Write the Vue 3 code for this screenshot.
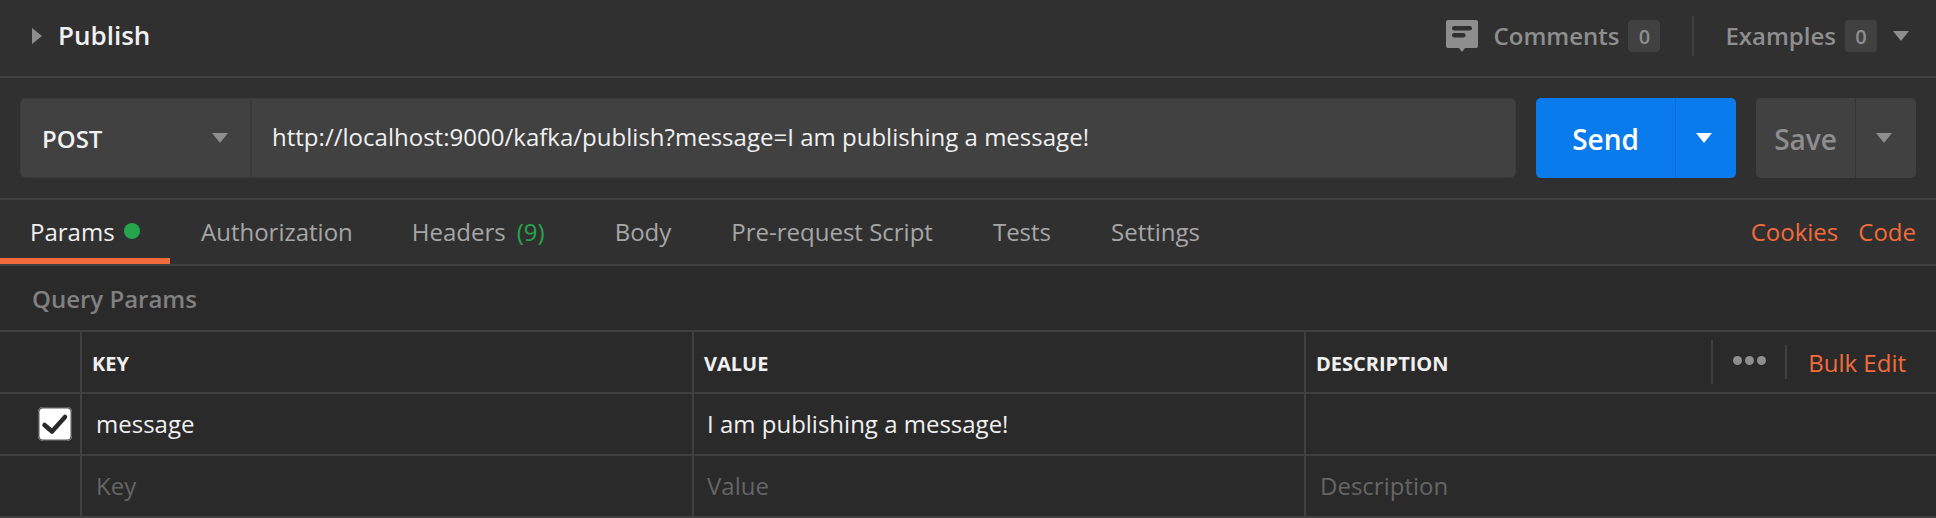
<script setup>
const tabs = [
  { label: 'Authorization' },
  { label: 'Headers', count: '(9)' },
  { label: 'Body' },
  { label: 'Pre-request Script' },
  { label: 'Tests' },
  { label: 'Settings' }
]
</script>

<template>
  <div class="page">
    <header class="title-bar">
      <div class="title-left">
        <span class="caret-right"></span>
        <span class="title">Publish</span>
      </div>
      <div class="title-right">
        <svg class="comment-icon" viewBox="0 0 32 32" width="32" height="32">
          <path fill="#8e8e8e" d="M2 0h28a2 2 0 0 1 2 2v24a2 2 0 0 1-2 2h-11l-3 4-3-4H2a2 2 0 0 1-2-2V2a2 2 0 0 1 2-2z" />
          <rect x="6" y="6" width="20" height="4.5" rx="2.2" fill="#303030" />
          <rect x="6" y="13" width="13.5" height="4.5" rx="2.2" fill="#303030" />
        </svg>
        <span class="meta">Comments</span>
        <span class="badge">0</span>
        <span class="meta-sep"></span>
        <span class="meta">Examples</span>
        <span class="badge">0</span>
        <span class="caret-down gray meta-caret"></span>
      </div>
    </header>

    <section class="url-bar">
      <div class="url-group">
        <div class="method">
          <span>POST</span>
          <span class="caret-down gray"></span>
        </div>
        <div class="url">http://localhost:9000/kafka/publish?message=I am publishing a message!</div>
      </div>
      <div class="send">
        <span class="send-label">Send</span>
        <span class="send-more"><span class="caret-down white"></span></span>
      </div>
      <div class="save">
        <span class="save-label">Save</span>
        <span class="save-more"><span class="caret-down gray"></span></span>
      </div>
    </section>

    <nav class="tabs">
      <div class="tab active">Params<span class="dot"></span></div>
      <div v-for="t in tabs" :key="t.label" class="tab">
        {{ t.label }}<span v-if="t.count" class="count">{{ t.count }}</span>
      </div>
      <div class="tab-links">
        <span>Cookies</span>
        <span>Code</span>
      </div>
    </nav>

    <main class="panel">
      <div class="panel-title">Query Params</div>
      <div class="row head">
        <div class="cell check"></div>
        <div class="cell key">KEY</div>
        <div class="cell value">VALUE</div>
        <div class="cell desc">
          <span>DESCRIPTION</span>
          <div class="head-tools">
            <span class="tool-sep tall"></span>
            <span class="dots"><i></i><i></i><i></i></span>
            <span class="tool-sep"></span>
            <span class="bulk">Bulk Edit</span>
          </div>
        </div>
      </div>
      <div class="row">
        <div class="cell check">
          <span class="checkbox">
            <svg viewBox="0 0 34 34" width="34" height="34">
              <path d="M6.5 18 14 24.5 27 10" fill="none" stroke="#2a2a2a" stroke-width="4.5" stroke-linecap="round" stroke-linejoin="round" />
            </svg>
          </span>
        </div>
        <div class="cell key input">message</div>
        <div class="cell value input">I am publishing a message!</div>
        <div class="cell desc input"></div>
      </div>
      <div class="row">
        <div class="cell check"></div>
        <div class="cell key input ph">Key</div>
        <div class="cell value input ph">Value</div>
        <div class="cell desc input ph">Description</div>
      </div>
    </main>
  </div>
</template>

<style>
html, body { margin: 0; background: #2c2c2c; }
</style>

<style scoped>
.page {
  width: 1936px;
  height: 518px;
  overflow: hidden;
  background: #303030;
  color: #f0f0f0;
  font-family: "Open Sans", "Noto Sans", sans-serif;
  font-size: 24px;
}
.title-bar {
  height: 76px;
  box-sizing: border-box;
  display: flex;
  align-items: center;
  justify-content: space-between;
  padding: 0 27px 4px 32px;
}
.title-left, .title-right { display: flex; align-items: center; }
.caret-right {
  width: 0; height: 0;
  border-top: 8px solid transparent;
  border-bottom: 8px solid transparent;
  border-left: 10px solid #8e8e8e;
  margin-right: 16px;
}
.title { font-weight: 600; font-size: 26px; color: #f0f0f0; padding-bottom: 2px; }
.comment-icon { margin-right: 16px; }
.meta { color: #8e8e8e; font-weight: 600; font-size: 24px; padding-bottom: 2px; }
.badge {
  width: 32px; height: 32px;
  margin-left: 9px;
  border-radius: 4px;
  background: #414141;
  color: #8e8e8e;
  font-size: 20px;
  font-weight: 600;
  display: flex; align-items: center; justify-content: center;
}
.meta-sep { width: 2px; height: 40px; background: #404040; margin: 0 31px 0 32px; }
.meta-caret { margin-left: 16px; }
.caret-down {
  display: inline-block;
  width: 0; height: 0;
  border-left: 8px solid transparent;
  border-right: 8px solid transparent;
  border-top: 10px solid #8e8e8e;
}
.caret-down.white { border-top-color: #fff; }
.url-bar {
  height: 124px;
  box-sizing: border-box;
  border-top: 2px solid #404040;
  border-bottom: 2px solid #404040;
  padding: 20px 20px 0 20px;
  display: flex;
  align-items: flex-start;
}
.url-group {
  width: 1496px;
  height: 80px;
  display: flex;
  background: #414141;
  border-radius: 5px;
  box-sizing: border-box;
  border: 1px solid #3c3c3c;
}
.method {
  width: 231px;
  box-sizing: border-box;
  border-right: 2px solid #3a3a3a;
  padding: 0 22px 0 21px;
  display: flex;
  align-items: center;
  justify-content: space-between;
  font-weight: 600;
  color: #f0f0f0;
}
.url { padding-left: 20px; display: flex; align-items: center; padding-bottom: 4px; flex: 1; letter-spacing: 0.014px; }
.send {
  width: 200px; height: 80px;
  margin-left: 20px;
  border-radius: 5px;
  background: #097bed;
  color: #fff;
  display: flex;
  font-weight: 600;
  font-size: 28px;
}
.send-label { width: 140px; padding-top: 2px; box-sizing: border-box; display: flex; align-items: center; justify-content: center; border-right: 1px solid #0a6fd3; }
.send-more { flex: 1; display: flex; align-items: center; justify-content: center; padding-right: 4px; }
.save {
  width: 160px; height: 80px;
  margin-left: 20px;
  border-radius: 5px;
  background: #414141;
  color: #8e8e8e;
  display: flex;
  font-weight: 600;
  font-size: 28px;
}
.save-label { width: 100px; padding-top: 2px; box-sizing: border-box; display: flex; align-items: center; justify-content: center; border-right: 1px solid #363636; }
.save-more { flex: 1; display: flex; align-items: center; justify-content: center; padding-right: 4px; }
.tabs {
  height: 66px;
  box-sizing: border-box;
  display: flex;
  align-items: center;
  color: #a6a6a6;
  padding-top: 4px;
  padding-bottom: 6px;
  border-bottom: 2px solid #404040;
}
.tab {
  flex: none;
  display: flex;
  align-items: center;
  height: 100%;
  padding: 0 30px;
}
.tab.active {
  width: 170px;
  margin-right: 1px;
  box-sizing: border-box;
  padding-right: 0;
  color: #f0f0f0;
  position: relative;
}
.tab.active + .tab { margin-right: -1px; }
.tab.active::after {
  content: "";
  position: absolute;
  left: 0; right: 0; bottom: -6px;
  height: 6px;
  background: #f26b3a;
}
.dot { width: 16px; height: 16px; border-radius: 50%; background: #26a54c; margin-left: 9px; }
.count { color: #26a54c; margin-left: 11px; margin-right: 10px; }
.tab-links { margin-left: auto; padding-right: 20px; color: #f26b3a; display: flex; gap: 20px; }
.panel { background: #2a2a2a; height: 252px; }
.panel-title {
  height: 64px;
  box-sizing: border-box;
  padding: 0 0 0 32px;
  display: flex; align-items: center;
  color: #808080;
  font-weight: 600;
  font-size: 24px;
}
.row {
  display: grid;
  grid-template-columns: 82px 612px 612px 1fr;
  height: 62px;
  border-top: 2px solid #404040;
  box-sizing: border-box;
}
.row:last-child { border-bottom: 2px solid #404040; height: 64px; }
.cell { border-right: 2px solid #404040; display: flex; align-items: center; box-sizing: border-box; min-width: 0; }
.cell.desc { border-right: 0; }
.head .cell { font-size: 20px; font-weight: 700; padding-left: 10px; padding-top: 2px; }
.head .check { padding: 0; }
.input { padding-left: 14px; padding-bottom: 2px; font-size: 24px; }
.value.input { padding-left: 13px; }
.ph { color: #656565; }
.check { justify-content: flex-end; padding-right: 8px; }
.checkbox {
  width: 34px; height: 34px;
  border-radius: 5px;
  background: #fff;
  box-shadow: inset 0 0 0 1.5px #555;
  display: flex; align-items: center; justify-content: center;
}
.desc { justify-content: space-between; }
.head-tools { display: flex; align-items: center; padding-right: 30px; margin-top: -2px; }
.tool-sep { width: 2px; height: 34px; background: #404040; }
.tool-sep.tall { height: 44px; }
.dots { display: flex; gap: 3px; margin: 0 19px 4px 20px; }
.dots i { width: 9px; height: 9px; border-radius: 50%; background: #8e8e8e; }
.bulk { color: #f26b3a; font-size: 24px; font-weight: 400; margin-left: 21px; }
</style>
